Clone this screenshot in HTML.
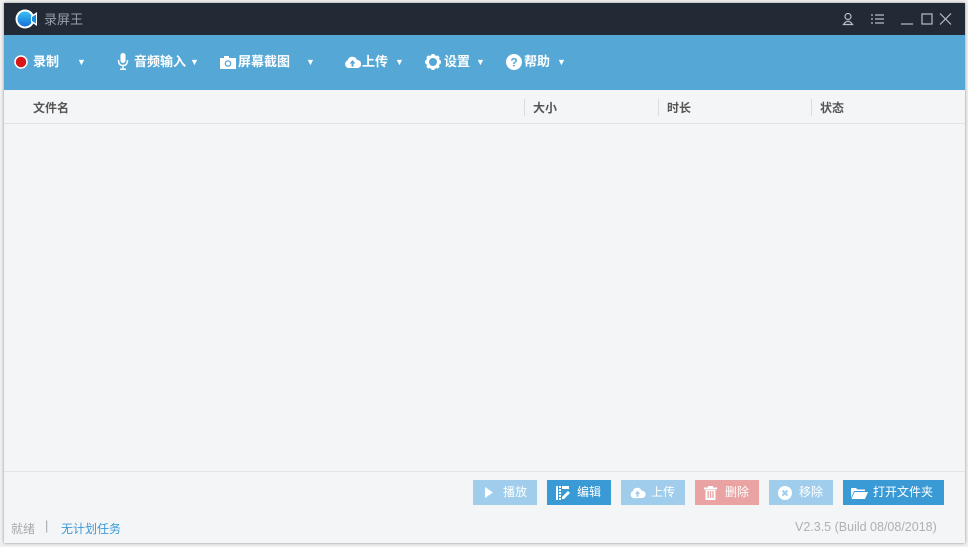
<!DOCTYPE html>
<html><head><meta charset="utf-8"><style>
*{margin:0;padding:0;box-sizing:border-box}
body{width:968px;height:547px;background:#f0f0f0;position:relative;overflow:hidden;font-family:"Liberation Sans","Noto Sans CJK SC",sans-serif;font-size:12px}
.win{position:absolute;left:4px;top:3px;width:961px;height:540px;background:#f4f5f7;box-shadow:0 0 3px rgba(0,0,0,.4)}
.title{position:absolute;left:0;top:0;width:961px;height:32px;background:#222a36}
.title .t{position:absolute;left:40px;top:6px;color:#9aa0a8;font-size:13px}
.tb{position:absolute;left:0;top:32px;width:961px;height:55px;background:#55a8d6;color:#fff;font-weight:bold;font-size:13px}
.tb span{position:absolute;top:19px;line-height:16px}
.ar{font-size:9px;font-weight:normal}
.hd{position:absolute;left:0;top:87px;width:961px;height:34px;border-bottom:1px solid #dfe3e6;color:#555;font-weight:bold;font-size:12px}
.hd span{position:absolute;top:9px}
.sep{position:absolute;top:9px;width:1px;height:17px;background:#dcdcdc}
.ftl{position:absolute;left:0;top:468px;width:961px;height:1px;background:#dfe5e8}
.btn{position:absolute;top:477px;height:25px;color:#fff;font-size:12px;line-height:25px}
.btn svg{position:absolute;top:6px}
.btn b{font-weight:normal;position:absolute;top:0}
</style></head><body>
<div class="win">
<div class="title">
<svg style="position:absolute;left:11px;top:6px" width="24" height="20" viewBox="0 0 24 20"><defs><linearGradient id="g" x1="0" y1="0" x2="0" y2="1"><stop offset="0" stop-color="#3cc0f5"/><stop offset="1" stop-color="#1470d8"/></linearGradient></defs><circle cx="10" cy="10" r="9.5" fill="#fff"/><circle cx="10" cy="10" r="7.5" fill="url(#g)"/><path d="M16 7 L22 3 L22 17 L16 13Z" fill="#fff"/><path d="M17 8 L21 5.5 L21 14.5 L17 12Z" fill="#1c8fe0"/></svg>
<span class="t">录屏王</span>
<svg style="position:absolute;left:838px;top:9px" width="110" height="14" viewBox="0 0 110 14" fill="none" stroke="#b8bec6" stroke-width="1.2"><circle cx="6" cy="4.5" r="3"/><path d="M1.5 12.5 Q6 6 10.5 12.5Z"/><path d="M29 3h2M29 7h2M29 11h2M33 3h9M33 7h9M33 11h9"/><path d="M59 12h12"/><rect x="80" y="2" width="10" height="10"/><path d="M98 1.5l11 11M109 1.5l-11 11"/></svg>
</div>
<div class="tb">
<svg style="position:absolute;left:10px;top:20px" width="14" height="14"><circle cx="7" cy="7" r="6" fill="#d81818" stroke="#fff" stroke-width="1.5"/></svg>
<span style="left:29px">录制</span><span class="ar" style="left:73px">▼</span>
<svg style="position:absolute;left:113px;top:18px" width="12" height="18" viewBox="0 0 12 18" fill="#fff"><rect x="3.5" y="0" width="5" height="10" rx="2.5"/><path d="M1.5 7 Q1.5 12.5 6 12.5 Q10.5 12.5 10.5 7" fill="none" stroke="#fff" stroke-width="1.4"/><rect x="5.3" y="12" width="1.4" height="4"/><rect x="3" y="15.5" width="6" height="1.5"/></svg>
<span style="left:130px">音频输入</span><span class="ar" style="left:186px">▼</span>
<svg style="position:absolute;left:216px;top:21px" width="16" height="13" viewBox="0 0 16 13"><rect x="0" y="2" width="16" height="11" fill="#fff"/><rect x="4" y="0" width="5" height="3" fill="#fff"/><circle cx="8" cy="7.5" r="3.3" fill="#55a8d6"/><circle cx="8" cy="7.5" r="2" fill="#fff"/></svg>
<span style="left:234px">屏幕截图</span><span class="ar" style="left:302px">▼</span>
<svg style="position:absolute;left:340px;top:21px" width="17" height="13" viewBox="0 0 17 13"><path d="M4 12 A4 4 0 0 1 3.5 4.5 A5 5 0 0 1 13 4 A4 4 0 0 1 13.5 12Z" fill="#fff"/><path d="M8.5 4 L5.5 7.5 H7.5 V10.5 H9.5 V7.5 H11.5Z" fill="#55a8d6"/></svg>
<span style="left:358px">上传</span><span class="ar" style="left:391px">▼</span>
<svg style="position:absolute;left:421px;top:19px" width="16" height="16" viewBox="0 0 16 16"><circle cx="8" cy="8" r="5.5" fill="none" stroke="#fff" stroke-width="3"/><g stroke="#fff" stroke-width="3"><path d="M8 0v3M8 13v3M0 8h3M13 8h3M2.3 2.3l2 2M11.7 11.7l2 2M2.3 13.7l2-2M11.7 4.3l2-2"/></g></svg>
<span style="left:440px">设置</span><span class="ar" style="left:472px">▼</span>
<svg style="position:absolute;left:502px;top:19px" width="16" height="16" viewBox="0 0 16 16"><circle cx="8" cy="8" r="8" fill="#fff"/><text x="8" y="12.5" text-anchor="middle" font-size="12" font-weight="bold" fill="#55a8d6" font-family="Liberation Sans">?</text></svg>
<span style="left:520px">帮助</span><span class="ar" style="left:553px">▼</span>
</div>
<div class="hd">
<span style="left:29px">文件名</span>
<div class="sep" style="left:520px"></div><span style="left:529px">大小</span>
<div class="sep" style="left:654px"></div><span style="left:663px">时长</span>
<div class="sep" style="left:807px"></div><span style="left:816px">状态</span>
</div>
<div class="ftl"></div>
<div class="btn" style="left:469px;width:64px;background:#9fcdeb"><svg style="left:12px;top:7px" width="8" height="11"><path d="M0 0L8 5.5L0 11Z" fill="#fff"/></svg><b style="left:30px">播放</b></div>
<div class="btn" style="left:543px;width:64px;background:#3a9ad6"><svg style="left:9px" width="14" height="14" viewBox="0 0 14 14" fill="#fff"><rect x="0" y="0" width="2" height="14"/><rect x="3" y="0" width="2" height="2"/><rect x="3" y="3" width="2" height="2"/><rect x="3" y="6" width="2" height="2"/><rect x="3" y="9" width="2" height="2"/><rect x="3" y="12" width="2" height="2"/><rect x="6" y="0" width="7" height="3"/><path d="M6 11 L12 5 L14 7 L8 13 H6Z"/></svg><b style="left:30px">编辑</b></div>
<div class="btn" style="left:617px;width:64px;background:#9fcdeb"><svg style="left:8px;top:7px" width="17" height="12" viewBox="0 0 17 13"><path d="M4 12 A4 4 0 0 1 3.5 4.5 A5 5 0 0 1 13 4 A4 4 0 0 1 13.5 12Z" fill="#fff"/><path d="M8.5 4 L5.5 7.5 H7.5 V10.5 H9.5 V7.5 H11.5Z" fill="#9fcdeb"/></svg><b style="left:30px">上传</b></div>
<div class="btn" style="left:691px;width:64px;background:#e9a3a3"><svg style="left:9px" width="13" height="14" viewBox="0 0 13 14" fill="#fff"><rect x="0" y="1.5" width="13" height="2"/><rect x="4" y="0" width="5" height="2"/><path d="M1.5 4h10v10h-10z"/><rect x="3.5" y="5" width="1.3" height="7" fill="#e9a3a3"/><rect x="5.9" y="5" width="1.3" height="7" fill="#e9a3a3"/><rect x="8.3" y="5" width="1.3" height="7" fill="#e9a3a3"/></svg><b style="left:30px">删除</b></div>
<div class="btn" style="left:765px;width:64px;background:#9fcdeb"><svg style="left:9px" width="14" height="14" viewBox="0 0 14 14"><circle cx="7" cy="7" r="7" fill="#fff"/><path d="M4.5 4.5l5 5M9.5 4.5l-5 5" stroke="#9fcdeb" stroke-width="2"/></svg><b style="left:30px">移除</b></div>
<div class="btn" style="left:839px;width:101px;background:#3a9ad6"><svg style="left:8px;top:7px" width="17" height="12" viewBox="0 0 17 12" fill="#fff"><path d="M0 1h5l1.5 1.5H14V4H3L0 11Z"/><path d="M3.5 5H17L14 12H0.5Z"/></svg><b style="left:30px">打开文件夹</b></div>
<span style="position:absolute;left:7px;top:517px;color:#a9a9a9">就绪</span>
<span style="position:absolute;left:41px;top:515px;color:#a9a9a9;font-size:13px">|</span>
<span style="position:absolute;left:57px;top:517px;color:#3a9ad6">无计划任务</span>
<span style="position:absolute;left:791px;top:517px;color:#b0b0b0;font-size:12.5px">V2.3.5 (Build 08/08/2018)</span>
</div>
</body></html>
